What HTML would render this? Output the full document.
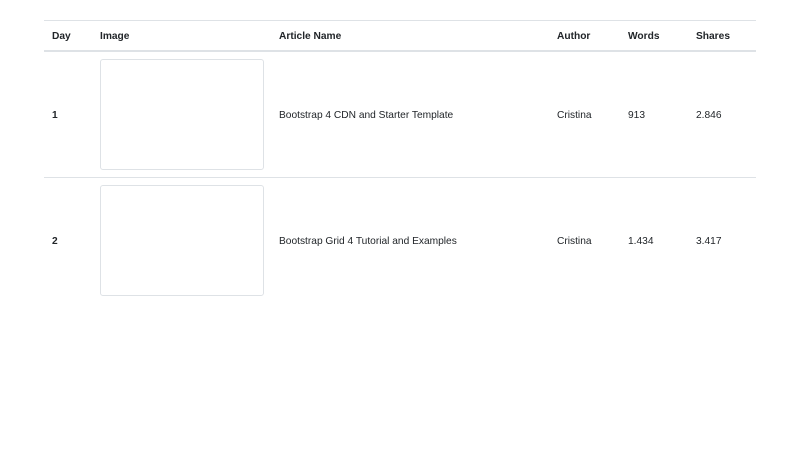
<!DOCTYPE html>
<html><head><meta charset="utf-8"><style>
body{margin:0;width:800px;height:450px;background:#fff;font-family:"Liberation Sans",sans-serif;font-size:10.2px;color:#212529;position:relative;overflow:hidden}
.l{position:absolute;left:44px;width:712px;background:#dee2e6}
.t{position:absolute;line-height:14px;white-space:nowrap}
.b{font-weight:bold}
.img{position:absolute;left:100px;width:162px;height:109px;border:1px solid #dee2e6;border-radius:3px}
</style></head><body>
<div class="l" style="top:20px;height:1px"></div>
<div class="l" style="top:50px;height:2px"></div>
<div class="l" style="top:177px;height:1px"></div>
<div class="t b" style="left:52px;top:30px">Day</div>
<div class="t b" style="left:100px;top:30px">Image</div>
<div class="t b" style="left:279px;top:30px">Article Name</div>
<div class="t b" style="left:557px;top:30px">Author</div>
<div class="t b" style="left:628px;top:30px">Words</div>
<div class="t b" style="left:696px;top:30px">Shares</div>

<div class="img" style="top:59px"></div>
<div class="t b" style="left:52px;top:109px">1</div>
<div class="t" style="left:279px;top:109px">Bootstrap 4 CDN and Starter Template</div>
<div class="t" style="left:557px;top:109px">Cristina</div>
<div class="t" style="left:628px;top:109px">913</div>
<div class="t" style="left:696px;top:109px">2.846</div>

<div class="img" style="top:185px"></div>
<div class="t b" style="left:52px;top:235px">2</div>
<div class="t" style="left:279px;top:235px">Bootstrap Grid 4 Tutorial and Examples</div>
<div class="t" style="left:557px;top:235px">Cristina</div>
<div class="t" style="left:628px;top:235px">1.434</div>
<div class="t" style="left:696px;top:235px">3.417</div>
</body></html>
